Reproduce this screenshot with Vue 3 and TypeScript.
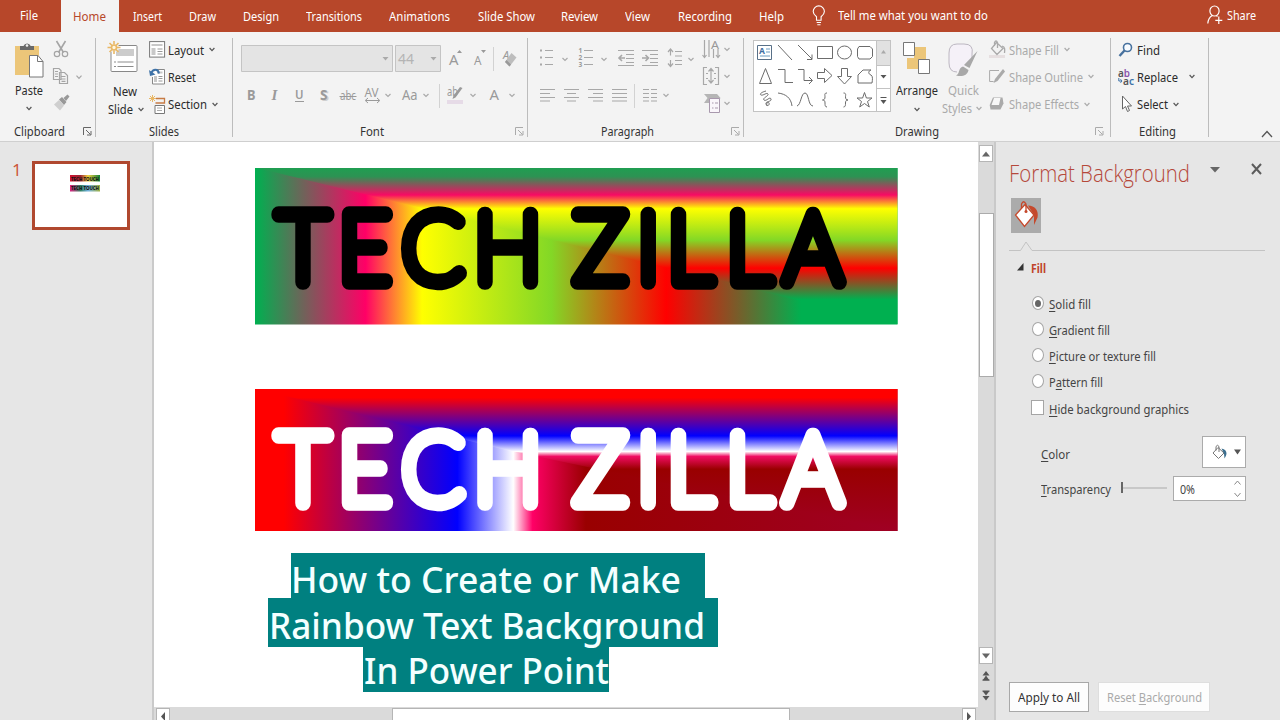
<script setup lang="ts">
import { h } from 'vue'
import type { FunctionalComponent, ObjectDirective } from 'vue'

// Condenses a label horizontally so that it takes exactly the given width.
const vFit: ObjectDirective<HTMLElement, number> = {
  mounted(el, { value }) {
    const natural = el.offsetWidth
    if (!natural) return
    el.style.transformOrigin = '0 50%'
    el.style.transform = `scaleX(${value / el.getBoundingClientRect().width})`
    el.style.marginRight = `${value - natural}px`
  },
}

const Chev: FunctionalComponent<{ c?: string }> = (p) =>
  h('svg', { width: 6, height: 5, viewBox: '0 0 6 5', style: 'flex:none;display:block' }, [
    h('path', { d: 'M.6 1 3 3.6 5.4 1', fill: 'none', stroke: p.c ?? '#555', 'stroke-width': 1.2 }),
  ])

const Launcher: FunctionalComponent<{ c?: string }> = (p) =>
  h('svg', { class: 'launcher', width: 9, height: 9, viewBox: '0 0 9 9' }, [
    h('path', { d: 'M.5 8V.5H8M3 3l4.5 4.5M8 4v4H4', fill: 'none', stroke: p.c ?? '#666', 'stroke-width': 1 }),
  ])

const tabs: [string, number][] = [
  ['Insert', 29], ['Draw', 27], ['Design', 36], ['Transitions', 56], ['Animations', 61],
  ['Slide Show', 57], ['Review', 37], ['View', 25], ['Recording', 54], ['Help', 25],
]

const fills: { key: string; pre: string; rest: string; w: number; on: boolean }[] = [
  { pre: '', key: 'S', rest: 'olid fill', w: 42, on: true },
  { pre: '', key: 'G', rest: 'radient fill', w: 61, on: false },
  { pre: '', key: 'P', rest: 'icture or texture fill', w: 107, on: false },
  { pre: 'P', key: 'a', rest: 'ttern fill', w: 54, on: false },
]

const fontChevs = [[388, 95], [426, 95], [473, 95], [512, 95]]
const paraChevs = [[565, 59], [604, 59], [691, 59], [727, 49], [727, 76], [727, 103], [666, 95]]
const letterX = '298 364 432.3 509.7 580 616.7 685.3 717.7 781.2 843.4'
</script>

<template>
  <div class="app">
    <header class="tabs">
      <span class="file"><span v-fit="18" class="t">File</span></span>
      <span class="home"><span v-fit="33" class="t">Home</span></span>
      <span v-for="[name, w] in tabs" :key="name" class="tab"><span v-fit="w" class="t">{{ name }}</span></span>
      <svg class="bulb" width="14" height="22" viewBox="0 0 14 22">
        <path d="M4.5 15.2v-3.4C2.6 10.300 1.200 8.700 1.200 6.500a5.600 5.600 0 0 1 11.200 0c0 2.200-1.400 3.800-3.300 5.300v3.400zM4.700 17.500h4.300M5.300 19.800h3.200" fill="none" stroke="#fff" stroke-width="1.100" />
      </svg>
      <span v-fit="150" class="t tell">Tell me what you want to do</span>
      <span class="share">
        <svg width="16" height="20" viewBox="0 0 16 20">
          <g fill="none" stroke="#fff" stroke-width="1.200"><ellipse cx="7.500" cy="6" rx="4.600" ry="5" /><path d="M.8 18.500c.3-4.200 2-6.500 4.400-8M9.500 10.800l1 .6M11.800 11.500v7.500M8.300 15.300h7" /></g>
        </svg>
        <span v-fit="29" class="t">Share</span>
      </span>
    </header>

    <section class="ribbon">
      <div class="group clipboard">
        <div class="content">
          <div class="big paste">
            <svg width="30" height="38" viewBox="16 41 30 38">
              <path d="M17 46h24v29H17z" fill="#ecc679" />
              <path d="M22 50v-4h3.500a3.800 3.800 0 0 1 7.200 0H36v4z" fill="#696969" /><circle cx="29" cy="45.500" r="1.300" fill="#f3f3f3" />
              <path d="M31.500 55.500h8.500l5 6v15.500H31.500z" fill="#fff" stroke="#777" /><path d="M39.500 55.500v6H45" fill="none" stroke="#777" />
            </svg>
            <span v-fit="28" class="t">Paste</span>
            <Chev />
          </div>
          <svg class="side" width="32" height="74" viewBox="52 39 32 74">
            <g fill="none" stroke="#a5a5a5" stroke-width="1.200">
              <path d="M56.500 41l7 11.500M65.500 41l-7 11.500" stroke-width="1.600" /><circle cx="57" cy="54" r="2.700" /><circle cx="65" cy="54" r="2.700" />
              <path d="M53.500 68.500h5.500l2 2v9h-7.500zM59.500 72.500h5l3 3v8h-8zM55 71.500h3M55 74h3M55 76.500h3M61.500 76.500h4M61.500 79h4M61.500 81.300h4" />
              <path d="M76.500 75.700l2.500 2.600 2.500-2.600" />
            </g>
            <path d="M54 104.500l5-4.500 5 5.500-4 5z" fill="#cfcfcf" /><path d="M59 99.500l3-2.500 4.500 5-2.500 3zM63.500 98l4-3.500 2 2-3.500 4.500z" fill="#999" />
          </svg>
        </div>
        <div class="label"><span v-fit="51" class="t">Clipboard</span><Launcher /></div>
      </div>

      <div class="group slides">
        <div class="content">
          <div class="big newslide">
            <svg width="32" height="34" viewBox="108 39 32 34">
              <rect x="112" y="44.500" width="26" height="26" rx="1" fill="#fff" stroke="#888" />
              <path d="M117 48h18v7h-18z" fill="#ccc" /><path d="M115 61h2M118.500 61h16M115 65.500h2M118.500 65.500h16" stroke="#8c8c8c" />
              <circle cx="115" cy="46.500" r="5" fill="#f3f3f3" /><g stroke="#e9b866" stroke-width="1.600"><path d="M115 40v3.500M115 49.500V53M108.500 46.500h3.500M118 46.500h3.500M110.500 42l2.500 2.500M117 48.500l2.500 2.500M119.500 42l-2.500 2.500M113 48.500l-2.500 2.500" /><circle cx="115" cy="46.500" r="2.500" fill="#fff6dd" /></g>
            </svg>
            <span v-fit="24" class="t">New</span>
            <span class="inline"><span v-fit="25" class="t">Slide</span><Chev /></span>
          </div>
          <div class="stack">
            <div class="row">
              <svg width="17" height="17" viewBox="0 0 17 17"><rect x=".6" y=".6" width="15" height="15.500" fill="#fff" stroke="#777" /><path d="M2.500 3h11v2h-11zM2.500 7h4v7h-4z" fill="#c8c8c8" /><path d="M8.500 8h5M8.500 10.500h5M8.500 13h5" stroke="#999" /></svg>
              <span v-fit="36" class="t">Layout</span><Chev />
            </div>
            <div class="row">
              <svg width="17" height="17" viewBox="0 0 17 17"><path d="M7 1.500h8.500v14.500h-12V9" fill="#fff" stroke="#888" /><path d="M5 8h3v6H5zM8 3.500h5.500v2H8z" fill="#c8c8c8" /><path d="M9.500 8.500h4M9.500 10.500h4M9.500 13h4" stroke="#999" /><path d="M10 5.500C9 .500 4 .800 2 5.500" fill="none" stroke="#3f73a8" stroke-width="2" /><path d="M0 2l1 6 5.500-1.500z" fill="#3f73a8" /></svg>
              <span v-fit="28" class="t">Reset</span>
            </div>
            <div class="row">
              <svg width="17" height="19" viewBox="0 0 17 19"><path d="M7 3.500h8.500V8H6.500" fill="none" stroke="#c77b44" stroke-width="1.300" /><path d="M6 10.500h9.500v8H6z" fill="#fff" stroke="#777" /><path d="M8 13h5M8 15.500h5" stroke="#aaa" /><path d="M3.500 0v7M0 3.500h7M1 1l5 5M6 1L1 6" stroke="#e9b866" /></svg>
              <span v-fit="39" class="t">Section</span><Chev />
            </div>
          </div>
        </div>
        <div class="label"><span v-fit="30" class="t">Slides</span></div>
      </div>

      <div class="group font">
        <svg class="tools" width="294" height="90" viewBox="233 32 294 90">
          <g fill="#e4e4e4" stroke="#c4c4c4"><path d="M241.500 45.500h151v26h-151zM395.500 45.500h45v26h-45z" /></g>
          <path d="M382.500 57h6l-3 3.500zM430.500 57h6l-3 3.500z" fill="#aaa" />
          <g fill="#9a9a9a">
            <text x="398" y="64" font-size="14" textLength="16" lengthAdjust="spacingAndGlyphs" fill="#b4b4b4">44</text>
            <text x="449" y="65" font-size="15" textLength="9.500" lengthAdjust="spacingAndGlyphs">A</text>
            <text x="474" y="65" font-size="12" textLength="7.500" lengthAdjust="spacingAndGlyphs">A</text>
            <path d="M457 53h5l-2.500-3zM481 50h5l-2.500 3z" />
            <text x="503" y="58.500" font-size="11" font-style="italic">A</text>
            <path d="M505 62l6.500-9 5 4.500-7 9z" fill="#bdbdbd" /><path d="M505 62l4.500 4.500 1.500-2-4.500-4.500z" fill="#999" />
            <text x="247" y="99.500" font-size="14" font-weight="700" textLength="8.500" lengthAdjust="spacingAndGlyphs">B</text>
            <text x="271.500" y="99.500" font-size="15" font-style="italic" font-family="Liberation Serif, serif" font-weight="700">I</text>
            <text x="295" y="99" font-size="13" font-weight="600" textLength="8.500" lengthAdjust="spacingAndGlyphs">U</text><path d="M295 101h9v1h-9z" />
            <text x="321.500" y="101" font-size="14" font-weight="700" fill="#cfcfcf" textLength="7.500" lengthAdjust="spacingAndGlyphs" aria-hidden="true">S</text><text x="320" y="99.500" font-size="14" font-weight="700" textLength="7.500" lengthAdjust="spacingAndGlyphs">S</text>
            <text x="340" y="100" font-size="12" textLength="16" lengthAdjust="spacingAndGlyphs">abc</text><path d="M339.500 96h17v1h-17z" />
            <text x="364.500" y="96.500" font-size="12.500" textLength="14" lengthAdjust="spacingAndGlyphs">AV</text>
            <path d="M366 100.500h13M368 98l-2.800 2.500 2.800 2.500M377 98l2.800 2.500-2.800 2.500" fill="none" stroke="#9a9a9a" />
            <text x="402" y="99.500" font-size="14" textLength="15.500" lengthAdjust="spacingAndGlyphs">Aa</text>
            <text x="447" y="95.500" font-size="12" textLength="11" lengthAdjust="spacingAndGlyphs">ab</text>
            <path d="M462.500 88l-7 9.500-3 1.500 1-3.500 6.500-8.500z" /><path d="M447 100h16v4h-16z" fill="#e6dbe7" />
            <text x="489.500" y="100" font-size="15" textLength="9.500" lengthAdjust="spacingAndGlyphs">A</text>
          </g>
          <path d="M493.500 47v24M439.500 84v24" stroke="#d2d2d2" />
          <path v-for="([x, y], i) in fontChevs" :key="i" :d="`M${x - 2.5} ${y - 1}l2.500 2.500 2.500-2.500`" fill="none" stroke="#aaa" stroke-width="1.200" />
        </svg>
        <div class="label"><span v-fit="24" class="t">Font</span><Launcher c="#aaa" /></div>
      </div>

      <div class="group paragraph">
        <svg class="tools" width="215" height="90" viewBox="528 32 215 90">
          <g fill="none" stroke="#a8a8a8" stroke-width="1.200">
            <path d="M545 50.500h8M545 57.500h8M545 64.500h8M584 50.500h9M584 57.500h9M584 64.500h9" />
            <path d="M540 50.500h2M540 57.500h2M540 64.500h2" stroke-width="2" />
            <path d="M618 50.500h16M626 54.500h8M626 58.500h8M626 62.500h8M618 65.500h16M642 50.500h16M650 54.500h8M650 58.500h8M650 62.500h8M642 65.500h16" />
            <path d="M625 58h-6M622 55l-3 3 3 3M642 58h6M645.500 55l3 3-3 3" stroke-width="1.600" />
            <path d="M670.500 49.500v6M668 52l2.500-3 2.500 3M670.500 60v6M668 63.500l2.500 3 2.500-3M675 51.500h7M675 56h7M675 60.500h7M675 64.500h7" />
            <path d="M704.500 40v17M709 40v17M713.500 49v9M718 49v9M702.500 55l2 2.500 2-2.500M716 55l2 2.500 2-2.500" />
            <path d="M707 67.500h-3.500v17h3.500M715 67.500h3.500v17h-3.500M711 69v13M708.500 71.500l2.500-3 2.500 3M708.500 80l2.500 3 2.500-3M706 73.500h2M706 78.500h2M714 73.500h2M714 78.500h2" />
            <path d="M540 89.500h15M540 93.500h10M540 97.500h15M540 101h10M564 89.500h15M567 93.500h9M564 97.500h15M567 101h9M588 89.500h15M593 93.500h10M588 97.500h15M593 101h10M612 89.500h15M612 93.500h15M612 97.500h15M612 101h15" />
            <path d="M643 89.500h6M651 89.500h6M643 93.500h6M651 93.500h6M643 97.500h6M651 97.500h6M643 101h6M651 101h6" />
          </g>
          <g font-size="6.500" fill="#999" font-weight="700"><text x="578.500" y="53">1</text><text x="578.500" y="60">2</text><text x="578.500" y="67">3</text></g>
          <text x="711" y="49" font-size="11" textLength="8" lengthAdjust="spacingAndGlyphs" fill="#999">A</text>
          <path d="M704 94h13l3.500 4-3.500 5h-13l3.500-5z" fill="#b5b5b5" />
          <path d="M709.500 98.500h10v14h-10z" fill="#faf6fb" stroke="#a898ad" /><path d="M712 103h1.500M715 103h3M712 108h1.500M715 108h3" stroke="#a898ad" />
          <path d="M634.500 84v24" stroke="#d2d2d2" />
          <path v-for="([x, y], i) in paraChevs" :key="i" :d="`M${x - 2.5} ${y - 1}l2.500 2.500 2.500-2.500`" fill="none" stroke="#aaa" stroke-width="1.200" />
        </svg>
        <div class="label"><span v-fit="53" class="t">Paragraph</span><Launcher c="#aaa" /></div>
      </div>

      <div class="group drawing">
        <div class="content">
          <svg class="shapes" width="139" height="73" viewBox="753 40 139 73">
            <rect x="753.500" y="40.500" width="137" height="71" fill="#fff" stroke="#c3c3c3" />
            <path d="M877 41h13v24h-13z" fill="#e1e1e1" /><path d="M876.500 41v71M877 65.500h13M877 88.500h13" stroke="#c3c3c3" />
            <path d="M881 53.500h5l-2.500-3.500z" fill="#aaa" /><path d="M880.500 75h6l-3 3.500zM880.500 100h6l-3 4z" fill="#555" /><path d="M880.500 97.500h6" stroke="#555" />
            <g fill="none" stroke="#6c6c6c" stroke-width="1">
              <path d="M757.500 45.500h14v14h-14z" stroke="#587088" /><path d="M766 49h4M766 52h4M760 56h10" stroke="#6c9cc0" />
              <path d="M778 45l14 15M798 45l14 14M812 54.500v5h-5M817.500 46.500h15v12h-15zM859 46.500h11l2.500 2.500v7.500l-2.500 2.500h-11l-1.500-2.500V49z" /><ellipse cx="844.500" cy="52.500" rx="7" ry="6.500" />
              <path d="M765.500 68.500l6 15h-12zM778 69.500h7v13h8M798 69.500h6v11h8M809 77l3.500 3.500-3.500 3.500M817.500 72.500h7v-4l7.500 7-7.500 7v-4h-7zM841.500 68.500h6v8h4l-7 7.500-7-7.500h4zM863 70h8c-3 1-3 4 0 5 2 1 1.500 5 1 8h-14V75z" />
              <path d="M766 91c-4 1-7 3-5 4s6-3 7-1-6 4-4 6 6-4 7-1-6 2-5 5 4 1 3-1-3 0-2 3M778 93c8 1 13 5 14 13M797 106c4-1 4-13 8-13s3 13 8 13" />
              <path d="M827 93c-3 0-2 2-2 4 0 2-1 3-2.500 3 2 0 2.500 1 2.500 3s0 4 2 4M843.500 93c3 0 2 2 2 4 0 2 1 3 2.500 3-2 0-2.500 1-2.500 3s0 4-2 4M864.500 92.500l1.900 5.500h5.600l-4.500 3.500 1.800 5.500-4.800-3.500-4.800 3.500 1.800-5.500-4.500-3.500h5.600z" />
            </g>
            <text x="759" y="53.500" font-size="8.500" font-weight="700" fill="#3f6f9f">A</text>
          </svg>
          <div class="big arrange">
            <svg width="28" height="34" viewBox="903 41 28 34"><path d="M914 47h12v12h-12zM907 58h12v11h-12z" fill="#ecc679" /><path d="M903.500 42.500h11v13h-11zM918.500 59.500h11v14h-11z" fill="#fff" stroke="#777" /></svg>
            <span v-fit="42" class="t">Arrange</span>
            <Chev />
          </div>
          <div class="big quick">
            <svg width="32" height="36" viewBox="950 42 32 36"><path d="M975 61v-7q2-10-8-10h-7q-8 0-8 9v10q0 9 8 9" fill="#f5f1f8" stroke="#bcb7c1" /><path d="M980.500 51l-8 17-5.500-3zM966 66.500l5.500 3.500c-1 6-7 7-12.500 5.500 4-1 2-8 7-9z" fill="#a8a8a8" /></svg>
            <span v-fit="31" class="t">Quick</span>
            <span class="inline"><span v-fit="30" class="t">Styles</span><Chev c="#aaa" /></span>
          </div>
          <div class="stack effects">
            <div class="row">
              <svg width="17" height="19" viewBox="0 0 17 19"><path d="M0 15h16v3H0z" fill="#e6dfe0" /><path d="M7.500 2.500l6.500 6-6 6-5.500-6zM5.500 6V2.500q1.500-3 3 0V8M13 6c3 1 3 3 2.500 7" fill="none" stroke="#aaa" stroke-width="1.300" /></svg>
              <span v-fit="50" class="t">Shape Fill</span><Chev c="#aaa" />
            </div>
            <div class="row">
              <svg width="17" height="17" viewBox="0 0 17 17"><path d="M10 2.500H.6v11h4" fill="none" stroke="#aaa" /><path d="M14 1l2 2.500-7.500 9.500-4 2 1.500-4z" fill="#aaa" /></svg>
              <span v-fit="74" class="t">Shape Outline</span><Chev c="#aaa" />
            </div>
            <div class="row">
              <svg width="17" height="17" viewBox="0 0 17 17"><path d="M4 1.500h9.500l1 6-3 6H1.500L.7 9z" fill="#aaa" /><path d="M5 2h6.500l-1.500 7H2.500z" fill="#f8f8f8" /></svg>
              <span v-fit="70" class="t">Shape Effects</span><Chev c="#aaa" />
            </div>
          </div>
        </div>
        <div class="label"><span v-fit="44" class="t">Drawing</span><Launcher c="#aaa" /></div>
      </div>

      <div class="group editing">
        <div class="content">
          <div class="stack">
            <div class="row">
              <svg width="16" height="16" viewBox="0 0 16 16"><circle cx="9.500" cy="5.500" r="4" fill="#f7fbff" stroke="#47719e" stroke-width="1.600" /><path d="M6.500 8.500L1.500 14" stroke="#47719e" stroke-width="2.400" /></svg>
              <span v-fit="23" class="t">Find</span>
            </div>
            <div class="row">
              <svg class="swap" width="16" height="20" viewBox="0 0 16 20"><g font-size="11" font-weight="600"><text x="0" y="9.500" textLength="12" lengthAdjust="spacingAndGlyphs" fill="#555">a<tspan fill="#8a56ad">b</tspan></text><text x="5" y="18" textLength="11" lengthAdjust="spacingAndGlyphs" fill="#555">a<tspan fill="#3f73a8">c</tspan></text></g><path d="M.8 11v3h3M2.500 12.200l1.500 1.800-1.500 1.800" fill="none" stroke="#3f73a8" /></svg>
              <span v-fit="41" class="t">Replace</span><Chev class="far" />
            </div>
            <div class="row">
              <svg width="16" height="18" viewBox="0 0 16 18"><path d="M4.500 1v13l3-2.500 2 5 2-1-2-4.500h4z" fill="#fff" stroke="#666" /></svg>
              <span v-fit="31" class="t">Select</span><Chev />
            </div>
          </div>
        </div>
        <div class="label"><span v-fit="37" class="t">Editing</span></div>
      </div>
      <div class="collapse"><svg width="12" height="8" viewBox="0 0 12 8"><path d="M1 7l5-5.500L11 7" fill="none" stroke="#555" stroke-width="1.300" /></svg></div>
    </section>

    <main class="body">
      <aside class="thumbs">
        <span class="num">1</span>
        <div class="thumb">
          <svg width="92" height="63" viewBox="35 164 92 63">
            <rect x="70" y="175" width="30" height="6.500" fill="url(#mini1)" /><rect x="70" y="185" width="30" height="6.500" fill="url(#mini2)" />
            <g font-size="6" font-weight="800" fill="#111"><text x="71" y="180.500" textLength="28" lengthAdjust="spacingAndGlyphs">TECH TOUCH</text><text x="71" y="190.300" textLength="28" lengthAdjust="spacingAndGlyphs">TECH TOUCH</text></g>
            <defs>
              <linearGradient id="mini1"><stop stop-color="#d01030" /><stop offset=".35" stop-color="#9a2430" /><stop offset=".6" stop-color="#f0d040" /><stop offset="1" stop-color="#108038" /></linearGradient>
              <linearGradient id="mini2"><stop stop-color="#e02080" /><stop offset=".35" stop-color="#308060" /><stop offset=".6" stop-color="#70b0e0" /><stop offset="1" stop-color="#a0b040" /></linearGradient>
            </defs>
          </svg>
        </div>
      </aside>

      <section class="stage">
        <div class="slide">
          <svg class="art" width="643" height="364" viewBox="255 167.500 643 364">
            <defs>
              <linearGradient id="ax"><stop stop-color="#00b050" /><stop offset=".172" stop-color="#ff0066" /><stop offset=".26" stop-color="#ffff00" /><stop offset=".461" stop-color="#83d826" /><stop offset=".64" stop-color="#ff0000" /><stop offset=".85" stop-color="#00b050" /></linearGradient>
              <linearGradient id="ay" x2="0" y2="1"><stop stop-color="#1f9e51" /><stop offset=".055" stop-color="#2d9253" /><stop offset=".172" stop-color="#f80a64" /><stop offset=".26" stop-color="#ffff00" /><stop offset=".461" stop-color="#83d826" /><stop offset=".64" stop-color="#ff0000" /><stop offset=".84" stop-color="#00b050" /></linearGradient>
              <linearGradient id="bx"><stop offset=".045" stop-color="#ff0000" /><stop offset=".315" stop-color="#0000ff" /><stop offset=".402" stop-color="#ffffff" /><stop offset=".432" stop-color="#ff0066" /><stop offset=".515" stop-color="#990000" /><stop offset="1" stop-color="#a00024" /></linearGradient>
              <linearGradient id="by" x2="0" y2="1"><stop offset=".06" stop-color="#ff0000" /><stop offset=".33" stop-color="#0000ff" /><stop offset=".44" stop-color="#ffffff" /><stop offset=".475" stop-color="#f00c62" /><stop offset=".565" stop-color="#990000" /><stop offset="1" stop-color="#a00024" /></linearGradient>
              <clipPath id="upperA"><path d="M255 167h643v157z" /></clipPath>
              <clipPath id="upperB"><path d="M255 388h643v143L513 451z" /></clipPath>
            </defs>
            <rect x="255" y="167.500" width="642.500" height="156.500" fill="url(#ax)" />
            <rect x="255" y="167.500" width="642.500" height="156.500" fill="url(#ay)" clip-path="url(#upperA)" />
            <rect x="255" y="388.500" width="642.500" height="142" fill="url(#bx)" />
            <rect x="255" y="388.500" width="642.500" height="142" fill="url(#by)" clip-path="url(#upperB)" />
            <g class="zilla" transform="scale(.93 1)">
              <text :x="letterX" y="281.300" fill="#000" stroke="#000">TECH ZILLA</text>
              <text :x="letterX" y="502.300" fill="#fff" stroke="#fff">TECH ZILLA</text>
            </g>
          </svg>
          <h1 class="caption">
            <span class="l1"><span v-fit="390" class="t">How to Create or Make</span></span>
            <span class="l2"><span v-fit="436" class="t">Rainbow Text Background</span></span>
            <span class="l3"><span v-fit="245" class="t">In Power Point</span></span>
          </h1>
        </div>
        <div class="hscroll">
          <span class="btn"><svg width="6" height="9" viewBox="0 0 6 9"><path d="M5 0v9L1 4.500z" fill="#555" /></svg></span>
          <span class="bar" />
          <span class="btn"><svg width="6" height="9" viewBox="0 0 6 9"><path d="M1 0v9l4-4.500z" fill="#555" /></svg></span>
        </div>
      </section>

      <div class="vscroll">
        <span class="vbtn"><svg width="8" height="6" viewBox="0 0 8 6"><path d="M0 5.500h8L4 .5z" fill="#666" /></svg></span>
        <span class="vbar" />
        <span class="vbtn down"><svg width="8" height="6" viewBox="0 0 8 6"><path d="M0 .5h8L4 5.500z" fill="#666" /></svg></span>
        <svg width="8" height="31" viewBox="0 0 8 31"><path d="M.5 5.500h7L4 1zM.5 10.500h7L4 5.500zM.5 21h7L4 25.500zM.5 26h7L4 30.500z" fill="#555" /><path d="M.5 10h7M.5 21h7" stroke="#555" /></svg>
      </div>

      <aside class="pane">
        <div class="head">
          <span v-fit="181" class="t title">Format Background</span>
          <svg width="10" height="6" viewBox="0 0 10 6"><path d="M0 0h10L5 5.500z" fill="#666" /></svg>
          <svg width="11" height="12" viewBox="0 0 11 12"><path d="M1 1l9 10M10 1L1 11" stroke="#5c5c5c" stroke-width="2" /></svg>
        </div>
        <div class="bucket">
          <svg width="26" height="29" viewBox="1013 200 26 29"><path d="M1025 204.500l9 10.500-9.500 11.500L1015.500 215z" fill="#fff" stroke="#c5492c" stroke-width="1.300" /><path d="M1021.500 208v-4q2-4.500 4.500 0v7" fill="none" stroke="#c5492c" stroke-width="1.300" /><circle cx="1026" cy="211.500" r="1.500" fill="#c5492c" /><path d="M1028 205.500c7 0 11 5 9.500 12l-3.500 7.500v-10z" fill="#c5492c" /></svg>
        </div>
        <svg class="notch" width="256" height="10" viewBox="0 0 256 10"><path d="M0 9.500h11.500L17 1l6 8.500h233" fill="none" stroke="#c3c3c3" /></svg>
        <div class="fillhead"><svg width="7" height="8" viewBox="0 0 7 8"><path d="M6.500 0v7.500H0z" fill="#333" /></svg><span v-fit="15" class="t">Fill</span></div>
        <div v-for="f in fills" :key="f.rest" class="opt">
          <span class="radio" :class="{ on: f.on }" /><span v-fit="f.w" class="t">{{ f.pre }}<u>{{ f.key }}</u>{{ f.rest }}</span>
        </div>
        <div class="opt hide"><span class="check" /><span v-fit="140" class="t"><u>H</u>ide background graphics</span></div>
        <div class="prop color">
          <span v-fit="29" class="t"><u>C</u>olor</span>
          <span class="picker">
            <svg width="15" height="17" viewBox="0 0 15 17"><path d="M6 3.500l6 5.500-5.500 5.500L1 9zM4 6.500V2.500q1.500-2.500 3 0V8" fill="none" stroke="#777" /><path d="M9.500 4.500c6 1 6 6 3 10l-.5-5z" fill="#3c6f8f" /></svg>
            <svg width="7" height="6" viewBox="0 0 7 6"><path d="M0 .5h7L3.500 5.500z" fill="#555" /></svg>
          </span>
        </div>
        <div class="prop trans">
          <span v-fit="70" class="t"><u>T</u>ransparency</span>
          <svg width="46" height="12" viewBox="0 0 46 12"><path d="M1 6h45" stroke="#aaa" /><path d="M1 0v11" stroke="#666" stroke-width="2" /></svg>
          <span class="spin"><span v-fit="15" class="t">0%</span><svg width="7" height="18" viewBox="0 0 7 18"><path d="M.5 4.500l3-3.500 3 3.500M.5 13l3 3.500 3-3.500" fill="none" stroke="#888" /></svg></span>
        </div>
        <div class="actions">
          <span class="apply"><span v-fit="62" class="t">App<u>l</u>y to All</span></span>
          <span class="reset"><span v-fit="95" class="t">Reset <u>B</u>ackground</span></span>
        </div>
      </aside>
    </main>
  </div>
</template>

<style>
body { margin: 0; overflow: hidden; }
</style>

<style scoped>
.app { width: 1280px; height: 720px; overflow: hidden; display: flex; flex-direction: column; background: #e6e6e6; font: 13px/18px "Noto Sans", "Open Sans", sans-serif; color: #2b2b2b; }
.app * { box-sizing: border-box; }
.app svg { display: block; flex: none; }
.t { display: inline-block; white-space: pre; flex: none; }
u { text-underline-offset: 2px; text-decoration-thickness: 1px; }

.tabs { height: 32px; flex: none; display: flex; align-items: center; background: #b7472a; color: #fff; padding-bottom: 1px; }
.file { margin: 0 23px 2px 20px; display: flex; }
.home { display: flex; align-items: center; height: 32px; width: 58px; padding-left: 12px; background: #f3f3f3; color: #b7472a; margin: 1px -13px 0 0; }
.tab { display: flex; margin-left: 27px; }
.bulb { margin-left: 28px; }
.tell { margin-left: 12px; margin-top: -2px; }
.share { display: flex; align-items: center; gap: 4px; margin: -2px 0 0 auto; padding-right: 24px; }

.ribbon { height: 110px; flex: none; display: flex; background: #f3f3f3; border-bottom: 1px solid #cfcfcf; }
.group { position: relative; display: flex; flex-direction: column; flex: none; }
.group::after { content: ""; position: absolute; right: 0; top: 6px; width: 1px; height: 99px; background: #bcbcbc; }
.clipboard { width: 96px; }
.slides { width: 137px; }
.font { width: 295px; }
.paragraph { width: 216px; }
.drawing { width: 367px; }
.editing { width: 98px; }
.content { height: 90px; display: flex; align-items: flex-start; }
.label { height: 18px; display: flex; align-items: center; justify-content: center; position: relative; color: #333; }
.label :deep(.launcher) { position: absolute; right: 4px; top: 5px; }
.clipboard .label { padding-right: 17px; }
.font .label { padding-right: 17px; }
.paragraph .label { padding-right: 17px; }
.drawing .label { padding-right: 21px; }
.drawing .label :deep(.launcher) { right: 7px; }
.editing .label { padding-right: 5px; }
.tools { font-family: "Noto Sans", sans-serif; }
.swap { overflow: visible !important; }
.big { display: flex; flex-direction: column; align-items: center; }
.inline { display: flex; align-items: center; gap: 4px; }
.paste { width: 28px; margin: 9px 9px 0 15px; }
.paste > .t { margin-top: 2px; }
.paste svg:last-child { margin-top: 7px; }
.side { margin-top: 7px; }
.newslide { margin: 8px 0 0 11px; width: 35px; }
.newslide > .t { margin: 8px 0 0 1px; }
.newslide .inline { margin-left: 3px; }
.newslide > svg { margin-right: 3px; }
.stack { margin: 4px 0 0 7px; }
.row { height: 27.3px; display: flex; align-items: center; gap: 5px; }
.row .t { margin-left: -3px; }
.shapes { margin: 8px 0 0 9px; }
.arrange { width: 42px; margin: 9px 0 0 4px; }
.arrange > .t { margin-top: 6px; }
.arrange svg:last-child { margin-top: 8px; }
.quick { width: 38px; margin: 10px 0 0 6px; color: #aaa; }
.quick > .t { margin-top: 3px; }
.quick .inline { margin-left: -2px; }
.effects { margin-left: 7px; color: #aaa; }
.effects .row .t { margin-left: -2px; }
.editing .row .t { margin-left: -2px; }
.far { margin-left: 6px; }
.collapse { margin: 98px 0 0 52px; }

.body { flex: 1; min-height: 0; display: flex; }
.thumbs { width: 154px; display: flex; align-items: flex-start; border-right: 2px solid #cacaca; padding-left: 12px; }
.num { width: 20px; font-size: 17px; line-height: 20px; margin-top: 18px; color: #cc573d; }
.thumb { margin-top: 19px; border: 3px solid #b0482f; background: #fff; }
.stage { width: 824px; display: flex; flex-direction: column; background: #fff; }
.slide { flex: 1; padding: 25.500px 0 0 101px; }
.zilla text { font-family: Lato, Inter, sans-serif; font-weight: 100; font-size: 97px; stroke-width: 15.500px; stroke-linejoin: round; stroke-linecap: round; }
.caption { margin: 21.500px 0 0 13px; font-size: 36px; line-height: 45px; font-weight: 500; color: #f4ffff; display: flex; flex-direction: column; align-items: flex-start; }
.caption > span { background: #008080; display: flex; align-items: center; }
.l1 { width: 414px; height: 45px; margin-left: 23px; padding: 8px 0 0 0; }
.l2 { width: 450px; height: 49px; padding: 6px 0 0 1px; }
.l3 { width: 246px; height: 45px; margin-left: 95px; padding: 1px 0 0 1px; }
.hscroll { height: 13px; display: flex; background: #dadada; padding: 1px 2px 0; overflow: hidden; }
.btn { width: 14px; height: 17px; border: 1px solid #b5b5b5; background: #fff; display: flex; align-items: center; justify-content: center; }
.bar { width: 399px; height: 17px; margin: 0 172px 0 222px; border: 1px solid #b5b5b5; background: #fff; }
.vscroll { width: 18px; background: #dadada; border-right: 2px solid #c9c9c9; display: flex; flex-direction: column; align-items: center; padding-top: 3px; }
.vbtn { width: 14px; height: 17px; flex: none; background: #fff; border: 1px solid #b5b5b5; display: flex; align-items: center; justify-content: center; }
.vbar { width: 15px; height: 164px; flex: none; margin: 51px 0 270px; background: #fff; border: 1px solid #ababab; }
.down { margin-bottom: 6px; }

.pane { flex: 1; padding-left: 13px; color: #444; display: flex; flex-direction: column; }
.head { display: flex; align-items: center; height: 36px; margin-top: 13px; }
.title { font-family: "Open Sans", "Noto Sans", sans-serif; font-size: 24px; line-height: 36px; font-weight: 350; color: #b5483a; }
.head svg { margin: -7px 0 0 20px; }
.head svg:last-child { margin: -8px 0 0 31px; }
.bucket { width: 30px; height: 35px; margin: 7px 0 0 2px; background: #ababab; padding: 2px; }
.notch { margin-top: 8px; }
.fillhead { display: flex; align-items: center; height: 20px; margin: 7px 0 12px 8px; gap: 7px; color: #c0432a; font-weight: 700; }
.fillhead svg { margin-top: -3px; }
.opt { height: 26px; display: flex; align-items: center; padding-left: 23px; gap: 5px; }
.opt .t { margin-top: 1px; }
.radio { width: 12px; height: 14px; border: 1px solid #a5a5a5; border-radius: 50%; background: #fff; display: flex; align-items: center; justify-content: center; }
.radio.on::after { content: ""; width: 6px; height: 7px; border-radius: 50%; background: #666; }
.hide { height: 28px; padding-left: 22px; }
.check { width: 13px; height: 15px; border: 1px solid #a5a5a5; background: #fff; margin-top: -2px; }
.prop { display: flex; align-items: center; padding-left: 32px; }
.color { height: 32px; margin-top: 14px; }
.color > .t { margin-top: 4px; }
.picker { margin-left: 132px; width: 44px; height: 32px; border: 1px solid #ababab; background: #fff; display: flex; align-items: center; padding-left: 9px; gap: 7px; }
.trans { height: 25px; margin-top: 8px; }
.trans > svg { margin: -2px 6px 0 10px; }
.spin { width: 73px; height: 25px; border: 1px solid #ababab; background: #fff; display: flex; align-items: center; justify-content: space-between; padding: 0 4px 0 6px; }
.actions { display: flex; margin-top: 181px; gap: 9px; }
.apply, .reset { height: 30px; background: #fdfdfd; border: 1px solid #a8a8a8; display: flex; align-items: center; padding-left: 8px; width: 80px; flex: none; color: #333; }
.reset { width: 112px; border-color: #dedede; color: #aaa; }
</style>
